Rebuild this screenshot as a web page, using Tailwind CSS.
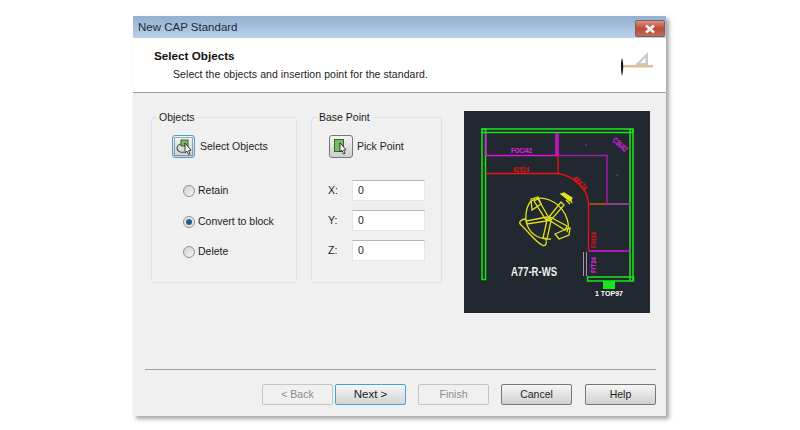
<!DOCTYPE html>
<html lang="en">
<head>
    <meta charset="UTF-8">
    <title>New CAP Standard</title>
    <script src="https://cdn.jsdelivr.net/npm/@tailwindcss/browser@4"></script>
</head>
<body class="bg-white w-[800px] h-[430px] overflow-hidden pt-[16px] pl-[133px] font-['Liberation_Sans',sans-serif] text-[10.5px] text-[#1c1c1c]">
    <div class="w-[533px] h-[400px] flex flex-col bg-[#f0f0f0] shadow-[3px_3px_4px_rgba(90,90,90,0.55)]">

        <!-- title bar -->
        <div class="h-[22px] shrink-0 flex items-center justify-between pl-[5px] pr-[1px] bg-gradient-to-b from-[#92b0d0] to-[#b9d1ea]">
            <span class="mt-[2px] text-[11.500px] text-[#1f2a36]">New CAP Standard</span>
            <div class="w-[30px] h-[17px] mt-[3px] flex items-center justify-center rounded-[2px] border border-[#8a5a55] bg-gradient-to-b from-[#d98f80] via-[#bf4a3a] to-[#c26a58]">
                <svg width="12" height="10" viewBox="0 0 12 10"><path d="M2 1.5 L10 8.5 M10 1.5 L2 8.5" stroke="#f4f4f4" stroke-width="2.6" /></svg>
            </div>
        </div>

        <!-- header -->
        <div class="h-[55px] shrink-0 flex justify-between bg-white border-b border-[#a0a0a0] pl-[21px] pr-[13px]">
            <div>
                <div class="mt-[11px] text-[11.700px] leading-[14px] font-bold text-[#111]">Select Objects</div>
                <div class="mt-[5px] ml-[19px] text-[10.500px] leading-[13px] tracking-[0.07px] text-[#222]">Select the objects and insertion point for the standard.</div>
            </div>
            <svg class="mt-[12px]" width="34" height="28" viewBox="0 0 34 28">
                <path d="M16 15 L29 2 L29 15 Z M21 13 L26.500 7.500 L26.500 13 Z" fill="#c9c9c9" fill-rule="evenodd" />
                <rect x="3" y="15" width="31" height="2.500" fill="#e2bd92" />
                <path d="M3 8 C4.600 12 4.600 20 3 26 C1.600 20 1.600 12 3 8 Z" fill="#15151a" />
            </svg>
        </div>

        <!-- body -->
        <div class="flex-1 flex items-start pl-[18px] pt-[18px]">
            <div class="relative w-[146px] h-[166px] mt-[6px] rounded-[3px] border border-[#dce1e6]">
                <span class="absolute -top-[7px] left-[5px] px-[2px] bg-[#f0f0f0] leading-[13px]">Objects</span>
                <div class="flex items-center mt-[17px] ml-[20px] gap-[5px]">
                    <div class="w-[23px] h-[23px] flex items-center justify-center rounded-[3px] border border-[#3fa6dc] bg-gradient-to-b from-[#f4f4f4] to-[#cfcfcf]">
                        <svg width="19" height="19" viewBox="0 0 19 19">
                            <rect x="0.500" y="0.500" width="18" height="18" fill="none" stroke="#555" stroke-dasharray="1 1" />
                            <path d="M3 12 C3 8 6 7 8 7" fill="none" stroke="#555" stroke-width="1.200" />
                            <path d="M3 12 C4 15 8 16 10 15" fill="none" stroke="#555" stroke-width="1.200" />
                            <rect x="7" y="3" width="7" height="6" fill="#7db66a" stroke="#2f6b25" />
                            <path d="M11 6 L11 16 L13 14 L14.500 17.500 L16 16.800 L14.600 13.500 L17 13.200 Z" fill="#fff" stroke="#111" stroke-width="0.800" />
                        </svg>
                    </div>
                    <span>Select Objects</span>
                </div>
                <div class="flex flex-col gap-[16.500px] mt-[26px] ml-[31px]">
                    <label class="flex items-center gap-[3px] h-[14px]">
                        <span class="w-[12px] h-[12px] rounded-full border border-[#8f8f8f] bg-gradient-to-br from-[#d2d2d2] to-[#f5f5f5]"></span>
                        <span>Retain</span>
                    </label>
                    <label class="flex items-center gap-[3px] h-[14px]">
                        <span class="w-[12px] h-[12px] flex items-center justify-center rounded-full border border-[#8f8f8f] bg-[#e8e8e8]">
                            <span class="w-[6px] h-[6px] rounded-full bg-[#1d5f93]"></span>
                        </span>
                        <span>Convert to block</span>
                    </label>
                    <label class="flex items-center gap-[3px] h-[14px]">
                        <span class="w-[12px] h-[12px] rounded-full border border-[#8f8f8f] bg-gradient-to-br from-[#d2d2d2] to-[#f5f5f5]"></span>
                        <span>Delete</span>
                    </label>
                </div>
            </div>

            <div class="relative w-[131px] h-[166px] mt-[6px] ml-[14px] rounded-[3px] border border-[#dce1e6]">
                <span class="absolute -top-[7px] left-[5px] px-[2px] bg-[#f0f0f0] leading-[13px]">Base Point</span>
                <div class="flex items-center mt-[17px] ml-[17px] gap-[4px]">
                    <div class="w-[24px] h-[23px] flex items-center justify-center rounded-[3px] border border-[#777] bg-gradient-to-b from-[#f4f4f4] to-[#cfcfcf]">
                        <svg width="16" height="17" viewBox="0 0 16 17">
                            <rect x="1.500" y="1.500" width="9" height="12" fill="#7db66a" stroke="#2f6b25" />
                            <path d="M7 5 L7 14 L9 12.300 L10.500 16 L12 15.400 L10.700 11.900 L13 11.700 Z" fill="#fff" stroke="#111" stroke-width="0.800" />
                        </svg>
                    </div>
                    <span>Pick Point</span>
                </div>
                <div class="flex flex-col gap-[9px] mt-[22px] ml-[16px]">
                    <div class="flex items-center h-[21px]">
                        <span class="w-[24px]">X:</span>
                        <div class="w-[73px] h-[21px] pl-[5px] leading-[19px] bg-white border border-[#e6e6e6] border-t-[#b5b5b5]">0</div>
                    </div>
                    <div class="flex items-center h-[21px]">
                        <span class="w-[24px]">Y:</span>
                        <div class="w-[73px] h-[21px] pl-[5px] leading-[19px] bg-white border border-[#e6e6e6] border-t-[#b5b5b5]">0</div>
                    </div>
                    <div class="flex items-center h-[21px]">
                        <span class="w-[24px]">Z:</span>
                        <div class="w-[73px] h-[21px] pl-[5px] leading-[19px] bg-white border border-[#e6e6e6] border-t-[#b5b5b5]">0</div>
                    </div>
                </div>
            </div>

            <!-- preview, coordinates are taken straight from the screenshot -->
            <svg class="ml-[22px]" width="186" height="202" viewBox="464 111 186 202" fill="none" font-family="'Liberation Sans',sans-serif">
                <rect x="464" y="111" width="186" height="202" fill="#212830" />
                <g stroke="#19e619" stroke-width="1.500">
                    <rect x="482" y="129" width="151" height="3.500" />
                    <rect x="482" y="129" width="3.500" height="150.500" />
                    <path d="M630 129 V281 M633 129 V281" />
                    <rect x="587.500" y="277" width="46" height="4" />
                    <path d="M590 204 H630" />
                </g>
                <rect x="603" y="281" width="12" height="8" fill="#19e619" />
                <text x="595" y="296" font-size="7" font-weight="bold" fill="#fff" textLength="28" lengthAdjust="spacingAndGlyphs">1 TOP97</text>

                <g stroke="#e011e0" stroke-width="1.500">
                    <path d="M486 133 V155.500 H558 V133 M556 133 V155" />
                    <path d="M589 251 H630" />
                </g>
                <path d="M583.500 252 V276 M586.500 252 V276" stroke="#d8a8d8" stroke-width="0.800" />
                <path d="M558 155.500 H607 V204 H630" stroke="#a21ca2" stroke-width="1.500" />
                <circle cx="586" cy="145" r="0.800" fill="#e011e0" />
                <circle cx="617" cy="175" r="0.800" fill="#e011e0" />
                <text x="511" y="152.500" font-size="8" font-weight="bold" fill="#f020f0" textLength="21" lengthAdjust="spacingAndGlyphs">FOC/42</text>
                <text transform="translate(612 141) rotate(42)" font-size="8" font-weight="bold" fill="#f020f0" textLength="17" lengthAdjust="spacingAndGlyphs">C36/42</text>
                <text transform="translate(596 273) rotate(-90)" font-size="8" font-weight="bold" fill="#f020f0" textLength="16" lengthAdjust="spacingAndGlyphs">F/T24</text>

                <path d="M486 173.500 H558 V155 M558 173.500 C575 176 588 190 588.500 204 V251" stroke="#ee1111" stroke-width="1.300" />
                <path d="M589 204 H607" stroke="#ee1111" stroke-width="1.300" />
                <text x="513" y="172" font-size="8" font-weight="bold" fill="#ee1111" textLength="16" lengthAdjust="spacingAndGlyphs">42X24</text>
                <text transform="translate(572 179) rotate(45)" font-size="8" font-weight="bold" fill="#ee1111" textLength="17" lengthAdjust="spacingAndGlyphs">48X24</text>
                <text transform="translate(596 248) rotate(-90)" font-size="8" font-weight="bold" fill="#ee1111" textLength="16" lengthAdjust="spacingAndGlyphs">F/H24</text>

                <!-- chair -->
                <g stroke="#e2e220" stroke-width="1.300">
                    <path d="M531 201 C542 194 558 201 565 214 C569 222 569 228 567 232 M551 239 C542 240 532 236 528 227 C524 218 526 207 531 201" />
                    <path d="M549 218 L538 199 L534 201 L546 220 Z" />
                    <path d="M549 217 L561 202 L564 205 L551 220 Z" />
                    <path d="M547 217 L526 221 L527 224 L547 221 Z" />
                    <path d="M550 217 L567 226 L565 230 L549 220 Z" />
                    <path d="M547 220 L543 238 L547 239 L551 221 Z" />
                    <path d="M526 219 C521 219 518 222 521 225 C528 231 536 243 543 245.500 C547 246 547 241 545 238" />
                    <path d="M531 199 L538 197 L541 204 L532 210 Z" />
                    <path d="M555 234 L564 230 L570 228 L569 235 L559 239 Z" />
                    <path d="M561 194 L570 201 L572 198 L564 193 Z" fill="#e2e220" />
                    <path d="M566 200 L570 204 M570 198 L572 203" />
                </g>

                <text x="511" y="276" font-size="12" font-weight="bold" fill="#f0f0f0" textLength="46" lengthAdjust="spacingAndGlyphs">A77-R-WS</text>
            </svg>
        </div>

        <!-- footer -->
        <div class="h-[47px] shrink-0 mx-[12px] mr-[10px] border-t border-[#a0a0a0] flex pt-[14px]">
            <button class="w-[71px] h-[21px] ml-[117px] rounded-[2px] border border-[#c4c4c4] bg-[#f0f0f0] text-[#8a8a8a]">&lt; Back</button>
            <button class="w-[71px] h-[21px] ml-[2px] rounded-[2px] border border-[#3fa6dc] bg-gradient-to-b from-[#f6f6f6] to-[#d4d4d4] text-[11.500px]">Next &gt;</button>
            <button class="w-[71px] h-[21px] ml-[12px] rounded-[2px] border border-[#c4c4c4] bg-[#f0f0f0] text-[#8a8a8a]">Finish</button>
            <button class="w-[71px] h-[21px] ml-[12px] rounded-[2px] border border-[#777] bg-gradient-to-b from-[#f6f6f6] to-[#d0d0d0]">Cancel</button>
            <button class="w-[71px] h-[21px] ml-[13px] rounded-[2px] border border-[#777] bg-gradient-to-b from-[#f6f6f6] to-[#d0d0d0]">Help</button>
        </div>
    </div>
</body>
</html>
